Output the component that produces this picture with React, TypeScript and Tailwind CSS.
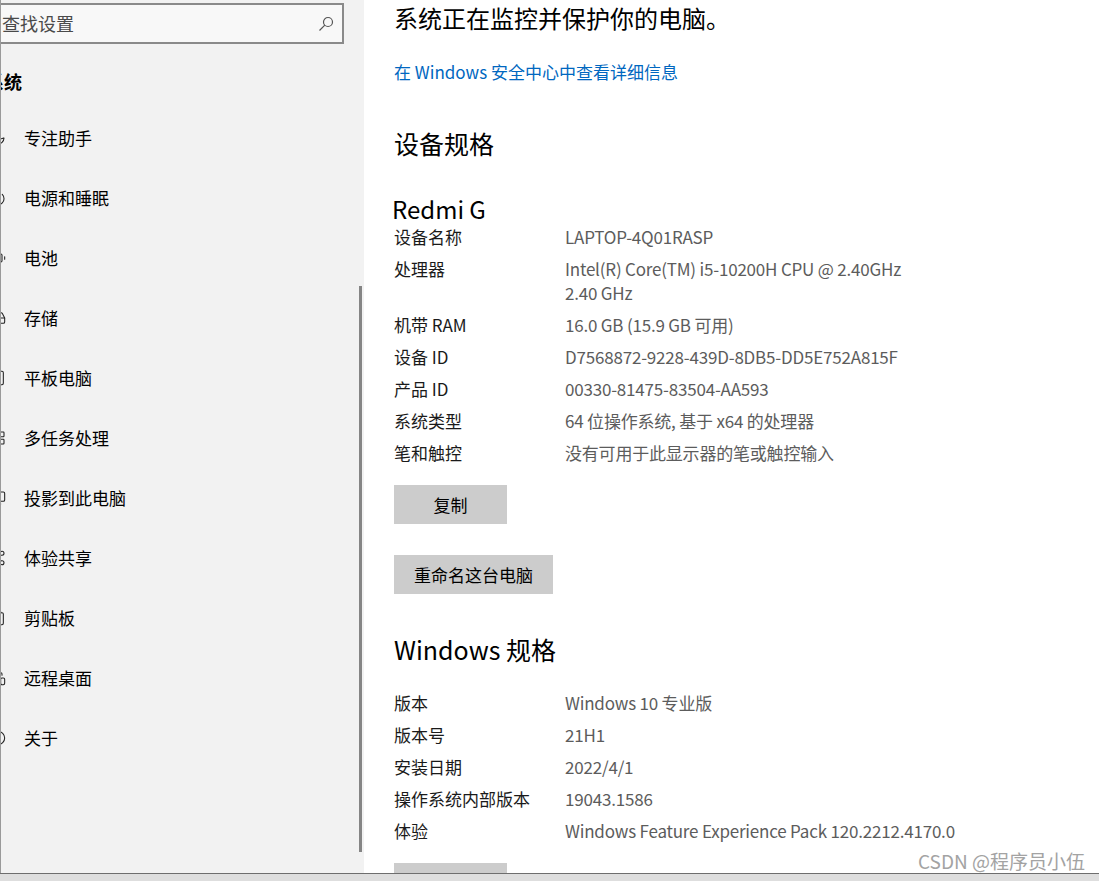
import {
  Moon,
  Power,
  BatteryMedium,
  HardDrive,
  Tablet,
  LayoutGrid,
  MonitorUp,
  Share2,
  Clipboard,
  MonitorSmartphone,
  Info,
} from "lucide-react";

const font = { fontFamily: '"Noto Sans CJK SC", "Noto Sans", sans-serif' };

const navItems = [
  { label: "专注助手", icon: Moon },
  { label: "电源和睡眠", icon: Power },
  { label: "电池", icon: BatteryMedium },
  { label: "存储", icon: HardDrive },
  { label: "平板电脑", icon: Tablet },
  { label: "多任务处理", icon: LayoutGrid },
  { label: "投影到此电脑", icon: MonitorUp },
  { label: "体验共享", icon: Share2 },
  { label: "剪贴板", icon: Clipboard },
  { label: "远程桌面", icon: MonitorSmartphone },
  { label: "关于", icon: Info },
];

const deviceSpecs: [string, string[]][] = [
  ["设备名称", ["LAPTOP-4Q01RASP"]],
  ["处理器", ["Intel(R) Core(TM) i5-10200H CPU @ 2.40GHz", "2.40 GHz"]],
  ["机带 RAM", ["16.0 GB (15.9 GB 可用)"]],
  ["设备 ID", ["D7568872-9228-439D-8DB5-DD5E752A815F"]],
  ["产品 ID", ["00330-81475-83504-AA593"]],
  ["系统类型", ["64 位操作系统, 基于 x64 的处理器"]],
  ["笔和触控", ["没有可用于此显示器的笔或触控输入"]],
];

const windowsSpecs: [string, string[]][] = [
  ["版本", ["Windows 10 专业版"]],
  ["版本号", ["21H1"]],
  ["安装日期", ["2022/4/1"]],
  ["操作系统内部版本", ["19043.1586"]],
  ["体验", ["Windows Feature Experience Pack 120.2212.4170.0"]],
];

function SpecTable({ rows }: { rows: [string, string[]][] }) {
  return (
    <div className="flex flex-col gap-[8px]">
      {rows.map(([label, values]) => (
        <div key={label} className="flex text-[17px] leading-[24px]">
          <div className="w-[171px] shrink-0 text-[#1a1a1a]">{label}</div>
          <div className="text-[#5c5c5c] tracking-[-0.2px]">
            {values.map((v) => (
              <div key={v} className="whitespace-nowrap">
                {v}
              </div>
            ))}
          </div>
        </div>
      ))}
    </div>
  );
}

export default function App() {
  return (
    <div className="relative h-[881px] w-[1099px] overflow-hidden bg-white flex flex-col" style={font}>
      <div className="flex flex-1 min-h-0">
        {/* sidebar */}
        <div className="relative w-[364px] shrink-0 bg-[#f2f2f2] border-l border-[#9a9a9a] overflow-hidden">
          <div className="ml-[-4px] mt-[3px] w-[347px] h-[41px] border-2 border-[#8a8a8a] bg-[#f8f8f8] flex items-center justify-between pr-[8px]">
            <span className="pl-[3px] text-[18px] text-[#4a4a4a]">查找设置</span>
            <svg width="16" height="16" viewBox="0 0 16 16" fill="none" stroke="#555" strokeWidth="1.2">
              <circle cx="10" cy="6" r="4.5" />
              <path d="M6.8 9.2 L1.5 14.5" />
            </svg>
          </div>
          <div className="ml-[-15px] mt-[25px] text-[18px] font-bold leading-[24px] text-black">系统</div>
          <div className="mt-[33px] flex flex-col gap-[36px]">
            {navItems.map(({ label, icon: Icon }) => (
              <div key={label} className="flex items-center h-[24px]">
                <Icon size={16} strokeWidth={1.6} className="ml-[-11px] shrink-0 text-[#222]" />
                <span className="ml-[18px] text-[17px] text-black">{label}</span>
              </div>
            ))}
          </div>
          {/* scrollbar */}
          <div className="absolute left-[358px] top-[286px] h-[566px] w-[3px] bg-[#858585]" />
        </div>

        {/* main */}
        <div className="flex-1 pl-[30px] overflow-hidden">
          <div className="mt-[2px] text-[24px] leading-[32px] text-black">系统正在监控并保护你的电脑。</div>
          <div className="mt-[26px] text-[17px] leading-[24px] text-[#0067c0]">在 Windows 安全中心中查看详细信息</div>
          <div className="mt-[42px] text-[25px] leading-[34px] text-black">设备规格</div>
          <div className="mt-[35px] ml-[-2px] text-[24px] leading-[28px] text-black">Redmi G</div>
          <div className="mt-[2px]">
            <SpecTable rows={deviceSpecs} />
          </div>
          <button className="mt-[20px] block h-[39px] w-[113px] bg-[#cccccc] text-[17px] text-black">复制</button>
          <button className="mt-[31px] block h-[39px] w-[159px] bg-[#cccccc] text-[17px] text-black">重命名这台电脑</button>
          <div className="mt-[38px] text-[25px] leading-[34px] text-black">Windows 规格</div>
          <div className="mt-[25px]">
            <SpecTable rows={windowsSpecs} />
          </div>
          <div className="mt-[20px] h-[39px] w-[113px] bg-[#cccccc]" />
        </div>
      </div>

      {/* bottom bar */}
      <div className="h-[8px] shrink-0 border-t border-[#6e6e6e] bg-[#dedede]" />

      {/* watermark */}
      <div className="absolute right-[14px] top-[847px] text-[19px] leading-[28px] text-[#a3a3a3]">
        CSDN @程序员小伍
      </div>
    </div>
  );
}
